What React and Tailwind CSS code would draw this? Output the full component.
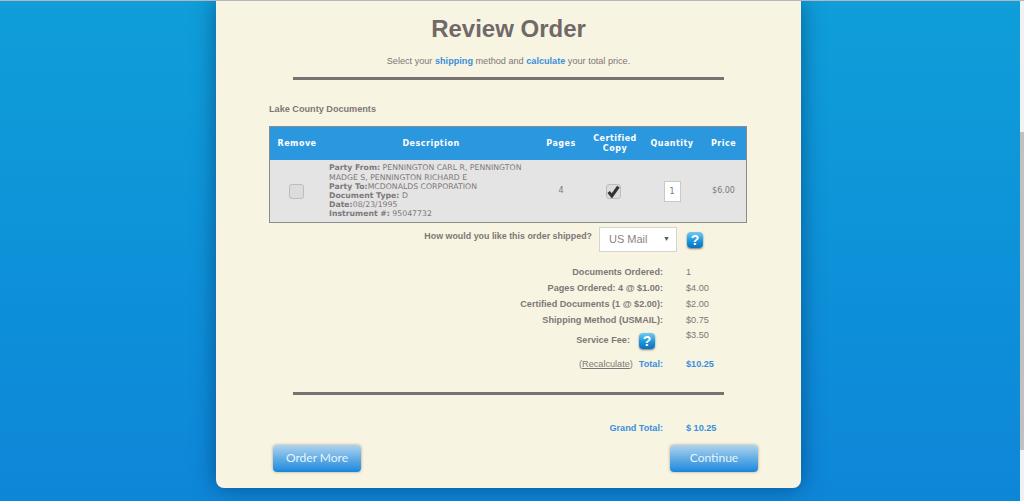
import React from "react";

const verdana = "font-['DejaVu_Sans',sans-serif]";

function HelpIcon() {
  return (
    <span className="flex h-[16px] w-[16px] items-center justify-center rounded-[4px] bg-gradient-to-b from-[#6fcaf4] via-[#1f9be0] to-[#0a70c0] text-[14px] leading-none font-bold text-white shadow-[0_1px_2px_rgba(0,0,0,0.5)]">
      ?
    </span>
  );
}

function TotalRow({ label, value }) {
  return (
    <div className="flex h-4 items-center">
      <div className="w-[447px] text-right font-bold">{label}</div>
      <div className="ml-[23px]">{value}</div>
    </div>
  );
}

function BlueButton({ children }) {
  return (
    <button className="h-[27px] w-[88px] rounded-[4px] bg-gradient-to-b from-[#aed3ee] via-[#62ade4] to-[#0e88de] pb-[2px] font-['Lato',sans-serif] text-[12px] text-[#e8f4fc] shadow-[0_0_3px_rgba(120,100,60,0.6)]">
      {children}
    </button>
  );
}

export default function App() {
  return (
    <div className="flex h-[501px] w-[1024px] overflow-hidden border-t border-[#b4b8bc] bg-gradient-to-b from-[#0f9ed9] to-[#0e86d8] font-['Liberation_Sans',sans-serif] text-[9.15px] text-[#7f7777]">
      <div className="flex-1 pl-[216px]">
        <div className="h-[487px] w-[585px] rounded-b-lg bg-[#f8f4e2] pt-[13px] shadow-[0_0_22px_rgba(0,40,90,0.55)]">
          <h1 className="text-center text-[24px] leading-[29px] font-bold text-[#716969]">
            Review Order
          </h1>
          <p className="mt-[11px] text-center leading-[14px]">
            Select your <b className="text-[#3a8fdc]">shipping</b> method and{" "}
            <b className="text-[#3a8fdc]">calculate</b> your total price.
          </p>
          <div className="mx-[77px] mt-[9px] h-[3px] bg-[#7a7272]" />

          <div className="mt-[22px] ml-[53px] leading-[14px] font-bold">
            Lake County Documents
          </div>

          <div className={`mt-[10px] ml-[53px] w-[478px] border border-[#8c8c8c] ${verdana} text-[8px]`}>
            <div className="flex h-[33px] items-center bg-[#2b97de] text-center leading-[10px] font-bold tracking-[0.5px] text-white">
              <div className="w-[54px]">Remove</div>
              <div className="w-[214px]">Description</div>
              <div className="w-[46px]">Pages</div>
              <div className="w-[58px] pl-[4px]">Certified<br />Copy</div>
              <div className="w-[58px] pl-[2px]">Quantity</div>
              <div className="flex-1 pl-[1px]">Price</div>
            </div>
            <div className="flex h-[62px] items-center bg-[#e4e4e4] text-[#7f7878]">
              <div className="flex w-[54px] justify-center pr-[1px]">
                <span className="h-[15px] w-[15px] rounded-[3px] border border-[#bdbdbd] bg-[#dcdcdc]" />
              </div>
              <div className="w-[214px] pl-[5px] text-[7.75px] leading-[9.2px] whitespace-nowrap">
                <b>Party From:</b> PENNINGTON CARL R, PENNINGTON
                <br />
                MADGE S, PENNINGTON RICHARD E
                <br />
                <b>Party To:</b>MCDONALDS CORPORATION
                <br />
                <b>Document Type:</b> D
                <br />
                <b>Date:</b>08/23/1995
                <br />
                <b>Instrument #:</b> 95047732
              </div>
              <div className="w-[46px] text-center">4</div>
              <div className="flex w-[58px] justify-center">
                <span className="flex h-[15px] w-[15px] items-center justify-center rounded-[3px] border border-[#bdbdbd] bg-[#dcdcdc]">
                  <svg viewBox="0 0 12 12" className="h-[13px] w-[13px]">
                    <path d="M1.5 6.5 L4.5 10 L10.5 1.5" fill="none" stroke="#333" strokeWidth="3" />
                  </svg>
                </span>
              </div>
              <div className="flex w-[58px] justify-center pl-[2px]">
                <span className="flex h-[21px] w-[17px] items-end justify-center border border-[#c8c8c8] bg-white pb-[3px] text-[#777]">
                  1
                </span>
              </div>
              <div className="flex-1 pl-[1px] text-center">$6.00</div>
            </div>
          </div>

          <div className="mt-[4px] flex h-[25px] items-center font-bold">
            <div className="w-[376px] pb-[5px] text-right text-[8.9px]">How would you like this order shipped?</div>
            <div className="ml-[7px] flex h-[25px] w-[78px] items-center justify-between border border-[#d4d4d4] bg-white pr-[6px] pl-[9px] text-[11px] font-normal text-[#8a8484]">
              US Mail
              <span className="text-[7px] text-[#555]">▼</span>
            </div>
            <div className="ml-[10px]">
              <HelpIcon />
            </div>
          </div>

          <div className="mt-[13px]">
            <TotalRow label="Documents Ordered:" value="1" />
            <TotalRow label="Pages Ordered: 4 @ $1.00:" value="$4.00" />
            <TotalRow label="Certified Documents (1 @ $2.00):" value="$2.00" />
            <TotalRow label="Shipping Method (USMAIL):" value="$0.75" />
            <div className="flex h-[24px]">
              <div className="flex w-[447px] items-center justify-end gap-[9px] pr-[8px]">
                <b>Service Fee:</b>
                <HelpIcon />
              </div>
              <div className="ml-[23px]">$3.50</div>
            </div>
            <div className="mt-[4px] flex h-4 items-center">
              <div className="w-[447px] text-right font-bold text-[#3a8fdc]">
                <span className="mr-[6px] font-normal text-[#7f7777]">
                  (<u>Recalculate</u>)
                </span>
                Total:
              </div>
              <div className="ml-[23px] font-bold text-[#3a8fdc]">$10.25</div>
            </div>
          </div>

          <div className="mx-[77px] mt-[19px] h-[3px] bg-[#7a7272]" />

          <div className="mt-[26px] flex h-4 items-center font-bold text-[#3a8fdc]">
            <div className="w-[447px] text-right">Grand Total:</div>
            <div className="ml-[23px]">$ 10.25</div>
          </div>

          <div className="mt-[8px] flex justify-between pr-[43px] pl-[57px]">
            <BlueButton>Order More</BlueButton>
            <BlueButton>Continue</BlueButton>
          </div>
        </div>
      </div>
      <div className="flex w-[4px] flex-col bg-[#f1f1f1]">
        <div className="h-[131px] shrink-0" />
        <div className="h-[318px] shrink-0 bg-[#c1c1c1]" />
      </div>
    </div>
  );
}
